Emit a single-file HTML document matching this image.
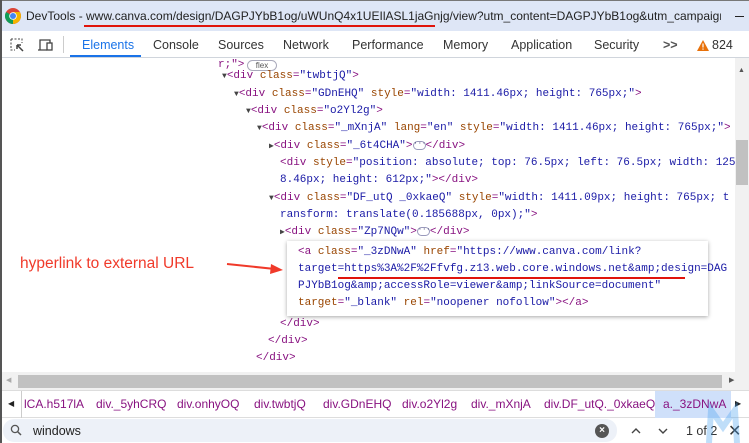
<!DOCTYPE html>
<html><head><style>
*{margin:0;padding:0;box-sizing:border-box}
body{width:749px;height:443px;overflow:hidden;background:#fff;font-family:"Liberation Sans",sans-serif;position:relative}
.title{position:absolute;left:0;top:0;width:749px;height:31px;background:#dee6f6;border-top:1px solid #777;font-size:12px;color:#222;overflow:hidden}
.tabs{position:absolute;left:0;top:31px;width:749px;height:27px;background:#fff;border-bottom:1px solid #d0d5dc;font-size:12.5px;color:#333}
.tabs span{position:absolute;top:7px}
.code{position:absolute;left:0;top:58px;width:735px;height:314px;font-family:"Liberation Mono",monospace;font-size:11px;color:#881280;overflow:hidden}
.l{position:absolute;white-space:pre;height:17px;line-height:17px}
.t{color:#881280}.a{color:#994500}.v{color:#1a1aa6}
.tri{color:#444;font-size:8px}
.ell{display:inline-block;width:13px;height:9px;border:1px solid #99b;border-radius:5px;vertical-align:middle;font-size:7px;line-height:5px;text-align:center;color:#336}
.pop{position:absolute;left:287px;top:241px;width:421px;height:75px;background:#fff;box-shadow:0 1px 4px rgba(0,0,0,.35)}
.bc{position:absolute;top:6px}
</style></head><body>
<div style="position:absolute;left:0;top:0;width:2px;height:443px;background:#555;z-index:5"></div>
<div class="title">
<svg style="position:absolute;left:5px;top:7px" width="16" height="16" viewBox="0 0 16 16"><circle cx="8" cy="8" r="8" fill="#db4437"/><path d="M8 8 L1.1 12 A8 8 0 0 0 8 16 Z" fill="#0f9d58"/><path d="M8 8 L8 16 A8 8 0 0 0 14.9 4 L8 4Z" fill="#f4b400"/><path d="M1.1 12 A8 8 0 0 1 1.1 4 L8 8Z" fill="#0f9d58"/><circle cx="8" cy="8" r="3.8" fill="#fff"/><circle cx="8" cy="8" r="3" fill="#4285f4"/></svg>
<div style="position:absolute;left:26px;top:8px;width:695px;white-space:nowrap;overflow:hidden">DevTools - www.canva.com/design/DAGPJYbB1og/uWUnQ4x1UEIlASL1jaGnjg/view?utm_content=DAGPJYbB1og&amp;utm_campaign...</div>
<div style="position:absolute;left:84px;top:24px;width:351px;height:2px;background:#e0140b"></div>
<div style="position:absolute;left:735px;top:15px;width:9px;height:1px;background:#222"></div>
</div>
<div class="tabs">
<svg style="position:absolute;left:10px;top:7px" width="14" height="14"><path d="M1 1h11v4M1 1v11h4" stroke="#444" fill="none" stroke-dasharray="2 1.5"/><path d="M7 7l6 6M7 7h4M7 7v4" stroke="#444" fill="none" stroke-width="1.5"/></svg>
<svg style="position:absolute;left:37px;top:7px" width="16" height="14"><path d="M1 12h9M3 12V2h10v3" stroke="#444" fill="none" stroke-width="1.3"/><rect x="10" y="5" width="5" height="7" stroke="#444" fill="none" stroke-width="1.3"/></svg>
<div style="position:absolute;left:63px;top:5px;width:1px;height:17px;background:#ccc"></div>
<span style="left:82px;color:#1a73e8">Elements</span>
<div style="position:absolute;left:70px;top:24px;width:71px;height:2px;background:#1a73e8"></div>
<span style="left:153px">Console</span>
<span style="left:218px">Sources</span>
<span style="left:283px">Network</span>
<span style="left:352px">Performance</span>
<span style="left:443px">Memory</span>
<span style="left:511px">Application</span>
<span style="left:594px">Security</span>
<span style="left:663px;font-weight:bold;color:#555">&gt;&gt;</span>
<svg style="position:absolute;left:697px;top:9px" width="12" height="11"><path d="M6 0L12 11H0Z" fill="#e8710a"/><rect x="5.4" y="3.5" width="1.2" height="4" fill="#fff"/><rect x="5.4" y="8.5" width="1.2" height="1.2" fill="#fff"/></svg>
<span style="left:712px">824</span>
</div>
<div class="code">
<div class="l" style="left:218px;top:-1px">r;"&gt;</div><div style="position:absolute;left:247px;top:2px;width:30px;height:11px;border:1px solid #aab;border-radius:6px;font-family:'Liberation Sans';font-size:8px;line-height:9px;text-align:center;color:#555">flex</div>
<div class="l" style="left:222px;top:10px"><span class="tri">▼</span><span class="t">&lt;div </span><span class="a">class</span>=<span class="v">"twbtjQ"</span>&gt;</div>
<div class="l" style="left:234px;top:28px"><span class="tri">▼</span>&lt;div <span class="a">class</span>=<span class="v">"GDnEHQ"</span> <span class="a">style</span>=<span class="v">"width: 1411.46px; height: 765px;"</span>&gt;</div>
<div class="l" style="left:246px;top:45px"><span class="tri">▼</span>&lt;div <span class="a">class</span>=<span class="v">"o2Yl2g"</span>&gt;</div>
<div class="l" style="left:257px;top:62px"><span class="tri">▼</span>&lt;div <span class="a">class</span>=<span class="v">"_mXnjA"</span> <span class="a">lang</span>=<span class="v">"en"</span> <span class="a">style</span>=<span class="v">"width: 1411.46px; height: 765px;"</span>&gt;</div>
<div class="l" style="left:269px;top:80px"><span class="tri">▶</span>&lt;div <span class="a">class</span>=<span class="v">"_6t4CHA"</span>&gt;<span class="ell">···</span>&lt;/div&gt;</div>
<div class="l" style="left:280px;top:97px">&lt;div <span class="a">style</span>=<span class="v">"position: absolute; top: 76.5px; left: 76.5px; width: 125</span></div>
<div class="l" style="left:280px;top:114px"><span class="v">8.46px; height: 612px;"</span>&gt;&lt;/div&gt;</div>
<div class="l" style="left:269px;top:132px"><span class="tri">▼</span>&lt;div <span class="a">class</span>=<span class="v">"DF_utQ _0xkaeQ"</span> <span class="a">style</span>=<span class="v">"width: 1411.09px; height: 765px; t</span></div>
<div class="l" style="left:280px;top:149px"><span class="v">ransform: translate(0.185688px, 0px);"</span>&gt;</div>
<div class="l" style="left:280px;top:166px"><span class="tri">▶</span>&lt;div <span class="a">class</span>=<span class="v">"Zp7NQw"</span>&gt;<span class="ell">···</span>&lt;/div&gt;</div>
<div class="l" style="left:280px;top:258px">&lt;/div&gt;</div>
<div class="l" style="left:268px;top:275px">&lt;/div&gt;</div>
<div class="l" style="left:256px;top:292px">&lt;/div&gt;</div>
</div>
<div style="position:absolute;left:735px;top:58px;width:14px;height:314px;background:#f1f1f1"></div>
<div style="position:absolute;left:736px;top:140px;width:12px;height:45px;background:#c1c1c1"></div>
<div style="position:absolute;left:738px;top:67px;font-size:7px;color:#555">▲</div>
<div class="pop">
<div class="l" style="left:11px;top:3px;font-family:'Liberation Mono',monospace;font-size:11px;color:#881280">&lt;a <span class="a">class</span>=<span class="v">"_3zDNwA"</span> <span class="a">href</span>=<span class="v">"https://www.canva.com/link?</span></div>
<div class="l" style="left:11px;top:20px;font-family:'Liberation Mono',monospace;font-size:11px"><span class="v">target=https%3A%2F%2Ffvfg.z13.web.core.windows.net&amp;amp;design=DAG</span></div>
<div class="l" style="left:11px;top:37px;font-family:'Liberation Mono',monospace;font-size:11px"><span class="v">PJYbB1og&amp;amp;accessRole=viewer&amp;amp;linkSource=document"</span></div>
<div class="l" style="left:11px;top:54px;font-family:'Liberation Mono',monospace;font-size:11px;color:#881280"><span class="a">target</span>=<span class="v">"_blank"</span> <span class="a">rel</span>=<span class="v">"noopener nofollow"</span>&gt;&lt;/a&gt;</div>
<div style="position:absolute;left:51px;top:36px;width:347px;height:2px;background:#e0140b"></div>
</div>
<div style="position:absolute;left:20px;top:255px;font-size:15.5px;color:#f03a2a;white-space:nowrap">hyperlink to external URL</div>
<svg style="position:absolute;left:225px;top:260px" width="60" height="16"><path d="M2 4 L50 9" stroke="#f03a2a" stroke-width="2"/><path d="M58 10 L46 4 L45 14Z" fill="#f03a2a"/></svg>
<div style="position:absolute;left:0;top:372px;width:749px;height:19px;background:#f1f1f1;border-bottom:1px solid #ddd"></div>
<div style="position:absolute;left:18px;top:375px;width:704px;height:13px;background:#c1c1c1"></div>
<div style="position:absolute;left:6px;top:376px;font-size:7px;color:#aaa">◀</div>
<div style="position:absolute;left:729px;top:376px;font-size:7px;color:#555">▶</div>
<div style="position:absolute;left:0;top:391px;width:749px;height:27px;background:#fff;border-bottom:1px solid #ddd;font-size:12px;color:#881280;white-space:nowrap">
<span style="position:absolute;left:8px;top:8px;font-size:8px;color:#222">◀</span>
<div style="position:absolute;left:21px;top:0;width:1px;height:27px;background:#ccc"></div>
<span class="bc" style="left:24px">lCA.h517lA</span>
<span class="bc" style="left:96px">div._5yhCRQ</span>
<span class="bc" style="left:177px">div.onhyOQ</span>
<span class="bc" style="left:254px">div.twbtjQ</span>
<span class="bc" style="left:323px">div.GDnEHQ</span>
<span class="bc" style="left:402px">div.o2Yl2g</span>
<span class="bc" style="left:471px">div._mXnjA</span>
<span class="bc" style="left:544px">div.DF_utQ._0xkaeQ</span>
<div style="position:absolute;left:655px;top:0;width:76px;height:27px;background:#cfe0fa"></div>
<span class="bc" style="left:663px">a._3zDNwA</span>
<span style="position:absolute;left:735px;top:8px;font-size:8px;color:#222">▶</span>
</div>
<div style="position:absolute;left:3px;top:419px;width:614px;height:23px;background:#edf1f8;border-radius:11px"></div>
<svg style="position:absolute;left:10px;top:424px" width="12" height="12"><circle cx="5" cy="5" r="3.6" stroke="#555" fill="none" stroke-width="1.3"/><path d="M7.6 7.6L11 11" stroke="#555" stroke-width="1.5"/></svg>
<div style="position:absolute;left:33px;top:424px;font-size:12.5px;color:#222">windows</div>
<div style="position:absolute;left:595px;top:424px;width:14px;height:14px;border-radius:7px;background:#555;color:#fff;font-size:10px;line-height:14px;text-align:center;font-weight:bold">×</div>
<svg style="position:absolute;left:630px;top:426px" width="12" height="10"><path d="M2 7L6 3L10 7" stroke="#444" fill="none" stroke-width="1.4"/></svg>
<svg style="position:absolute;left:657px;top:426px" width="12" height="10"><path d="M2 3L6 7L10 3" stroke="#444" fill="none" stroke-width="1.4"/></svg>
<div style="position:absolute;left:686px;top:424px;font-size:12.5px;color:#333">1 of 2</div>
<div style="position:absolute;left:728px;top:421px;font-size:16px;color:#333">✕</div>
<svg style="position:absolute;left:706px;top:400px;opacity:.35" width="34" height="43" viewBox="0 0 34 43"><path d="M3 43 L5 10 L17 27 L29 10 L31 43" stroke="#4aa3f0" stroke-width="6" fill="none"/></svg>
</body></html>
